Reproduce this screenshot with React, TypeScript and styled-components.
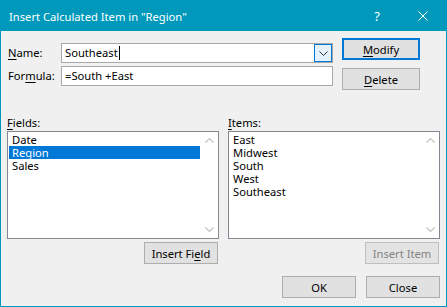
import styled, { createGlobalStyle } from 'styled-components';

const GlobalStyle = createGlobalStyle`
  body {
    margin: 0;
    background: #ffffff;
    font-family: "Noto Sans", "Open Sans", sans-serif;
    font-size: 11.2px;
    color: #000000;
  }
`;

const FIELDS = ['Date', 'Region', 'Sales'];
const ITEMS = ['East', 'Midwest', 'South', 'West', 'Southeast'];

export default function App() {
  return (
    <>
      <GlobalStyle />
      <Window>
        <TitleBar>
          <TitleText>Insert Calculated Item in "Region"</TitleText>
          <CaptionButton>?</CaptionButton>
          <CaptionButton>
            <svg width="10" height="10" viewBox="0 0 10 10">
              <path d="M0.5 0.5 L9.5 9.5 M9.5 0.5 L0.5 9.5" stroke="#ffffff" strokeWidth="1" fill="none" />
            </svg>
          </CaptionButton>
        </TitleBar>

        <Body>
          <TopSection>
            <FormGrid>
              <Label><u>N</u>ame:</Label>
              <Combo>
                <ComboText>
                  Southeast<Caret />
                </ComboText>
                <DropButton>
                  <svg width="9" height="5" viewBox="0 0 9 5">
                    <path d="M0.5 0.5 L4.5 4.5 L8.5 0.5" stroke="#333333" strokeWidth="1" fill="none" />
                  </svg>
                </DropButton>
              </Combo>
              <Label>For<u>m</u>ula:</Label>
              <TextBox>=South +East</TextBox>
            </FormGrid>
            <ButtonColumn>
              <Button $default><u>M</u>odify</Button>
              <Button><u>D</u>elete</Button>
            </ButtonColumn>
          </TopSection>

          <ListsSection>
            <ListColumn>
              <Label><u>F</u>ields:</Label>
              <ListBox>
                <ListRows>
                  {FIELDS.map((f) => (
                    <Row key={f} $selected={f === 'Region'}>{f}</Row>
                  ))}
                </ListRows>
                <ScrollBar />
              </ListBox>
              <SmallButton>Insert Fi<u>e</u>ld</SmallButton>
            </ListColumn>
            <ListColumn>
              <Label><u>I</u>tems:</Label>
              <ListBox>
                <ListRows>
                  {ITEMS.map((f) => (
                    <Row key={f}>{f}</Row>
                  ))}
                </ListRows>
                <ScrollBar />
              </ListBox>
              <SmallButton disabled>Insert Item</SmallButton>
            </ListColumn>
          </ListsSection>

          <Footer>
            <Button $width={74}>OK</Button>
            <Button $width={74}>Close</Button>
          </Footer>
        </Body>
      </Window>
    </>
  );
}

const ScrollBar = () => (
  <Scroll>
    <ArrowBox>
      <svg width="9" height="5" viewBox="0 0 9 5">
        <path d="M0.5 4.5 L4.5 0.5 L8.5 4.5" stroke="#c2c2c2" strokeWidth="1.2" fill="none" />
      </svg>
    </ArrowBox>
    <ArrowBox>
      <svg width="9" height="5" viewBox="0 0 9 5">
        <path d="M0.5 0.5 L4.5 4.5 L8.5 0.5" stroke="#c2c2c2" strokeWidth="1.2" fill="none" />
      </svg>
    </ArrowBox>
  </Scroll>
);

//#region STYLED COMPONENTS
const Window = styled.div`
  width: 447px;
  height: 307px;
  box-sizing: border-box;
  border: 1px solid #0099bc;
  background: #f0f0f0;
  display: flex;
  flex-direction: column;
`;

const TitleBar = styled.div`
  height: 30px;
  background: #0099bc;
  display: flex;
  align-items: center;
  color: #ffffff;
`;

const TitleText = styled.div`
  flex: 1;
  padding-left: 8px;
  font-size: 11.2px;
  white-space: nowrap;
`;

const CaptionButton = styled.div`
  width: 46px;
  height: 30px;
  display: flex;
  align-items: center;
  justify-content: center;
  font-size: 13px;
`;

const Body = styled.div`
  flex: 1;
  display: flex;
  flex-direction: column;
  padding: 0 6px 0 6px;
`;

const TopSection = styled.div`
  display: flex;
  padding: 7px 0 0 1px;
  gap: 9px;
`;

const FormGrid = styled.div`
  margin-top: 5px;
  display: grid;
  grid-template-columns: 53px 272px;
  grid-auto-rows: 20px;
  row-gap: 3px;
  align-items: center;
  align-self: flex-start;
`;

const Label = styled.div`
  height: 16px;
  line-height: 16px;
  white-space: nowrap;
  u {
    text-underline-offset: 2px;
  }
`;

const TextBox = styled.div`
  height: 20px;
  box-sizing: border-box;
  border: 1px solid #a8a8a8;
  background: #ffffff;
  padding-left: 3px;
  line-height: 18px;
  white-space: nowrap;
`;

const Combo = styled(TextBox)`
  display: flex;
  align-items: center;
  padding-right: 0;
`;

const ComboText = styled.div`
  flex: 1;
  display: flex;
  align-items: center;
`;

const Caret = styled.span`
  width: 1px;
  height: 14px;
  background: #000000;
  margin-left: 1px;
`;

const DropButton = styled.div`
  width: 18px;
  height: 18px;
  box-sizing: border-box;
  border: 1px solid #0078d7;
  background: #e5f1fb;
  display: flex;
  align-items: center;
  justify-content: center;
`;

const ButtonColumn = styled.div`
  display: flex;
  flex-direction: column;
  gap: 8px;
`;

const Button = styled.div<{ $default?: boolean; $width?: number }>`
  width: ${({ $width }) => $width ?? 78}px;
  height: 22px;
  box-sizing: border-box;
  border: ${({ $default }) => ($default ? '2px solid #0078d7' : '1px solid #adadad')};
  background: #e1e1e1;
  display: flex;
  align-items: center;
  justify-content: center;
  white-space: nowrap;
  u {
    text-underline-offset: 2px;
  }
`;

const SmallButton = styled.div<{ disabled?: boolean }>`
  align-self: flex-end;
  margin: 3px 1px 0 0;
  width: 74px;
  height: 22px;
  box-sizing: border-box;
  border: 1px solid ${({ disabled }) => (disabled ? '#bfbfbf' : '#adadad')};
  background: ${({ disabled }) => (disabled ? '#e3e3e3' : '#e1e1e1')};
  color: ${({ disabled }) => (disabled ? '#838383' : '#000000')};
  display: flex;
  align-items: center;
  justify-content: center;
  white-space: nowrap;
  u {
    text-underline-offset: 2px;
  }
`;

const ListsSection = styled.div`
  margin-top: 25px;
  display: grid;
  grid-template-columns: 212px 212px;
  column-gap: 9px;
`;

const ListColumn = styled.div`
  display: flex;
  flex-direction: column;
`;

const ListBox = styled.div`
  height: 108px;
  box-sizing: border-box;
  border: 1px solid #828790;
  background: #ffffff;
  display: flex;
`;

const ListRows = styled.div`
  flex: 1;
  padding: 1px;
`;

const Row = styled.div<{ $selected?: boolean }>`
  height: 13px;
  line-height: 13px;
  padding-left: 3px;
  white-space: nowrap;
  background: ${({ $selected }) => ($selected ? '#0078d7' : 'transparent')};
  color: ${({ $selected }) => ($selected ? '#ffffff' : '#000000')};
`;

const Scroll = styled.div`
  width: 17px;
  display: flex;
  flex-direction: column;
  justify-content: space-between;
`;

const ArrowBox = styled.div`
  height: 17px;
  display: flex;
  align-items: center;
  justify-content: center;
`;

const Footer = styled.div`
  margin-top: 12px;
  display: flex;
  justify-content: flex-end;
  gap: 10px;
`;
//#endregion
